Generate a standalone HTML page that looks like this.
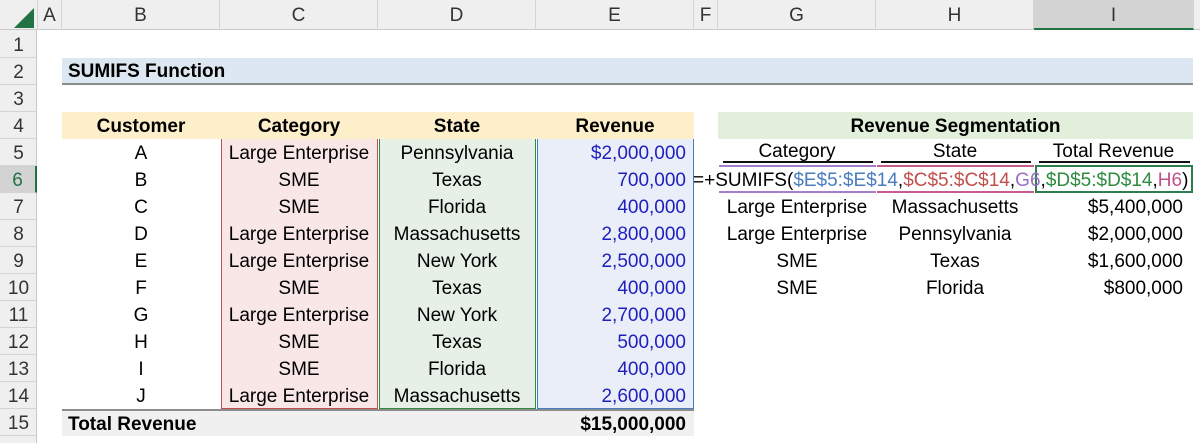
<!DOCTYPE html>
<html><head><meta charset="utf-8"><style>
*{margin:0;padding:0;box-sizing:border-box}
body{width:1200px;height:443px;overflow:hidden;background:#fff;font-family:"Liberation Sans",Arial,sans-serif;font-size:19px;color:#000;position:relative}
.a{position:absolute}
.t{position:absolute;height:27px;line-height:29px;white-space:nowrap}
.c{text-align:center}.r{text-align:right}.b{font-weight:bold}
.ch{position:absolute;top:0;height:30px;line-height:31px;text-align:center;color:#333;font-size:19px;border-right:1px solid #d4d4d4}
.rh{position:absolute;left:0;width:37px;height:27px;line-height:29px;text-align:center;color:#333;border-bottom:1px solid #d4d4d4;font-size:19px}
.blue{color:#1f1fbf}
</style></head><body>
<div class="a" style="left:0;top:0;width:1200px;height:30px;background:#efefef;border-bottom:1px solid #c8c8c8"></div>
<svg class="a" style="left:14px;top:8px" width="20" height="20"><polygon points="20,0 20,20 0,20" fill="#217346"/></svg>
<div class="ch" style="left:37px;width:25px;border-left:1px solid #d4d4d4">A</div>
<div class="ch" style="left:62px;width:158px">B</div>
<div class="ch" style="left:220px;width:158px">C</div>
<div class="ch" style="left:378px;width:158px">D</div>
<div class="ch" style="left:536px;width:158px">E</div>
<div class="ch" style="left:694px;width:24px">F</div>
<div class="ch" style="left:718px;width:158px">G</div>
<div class="ch" style="left:876px;width:158px">H</div>
<div class="ch" style="left:1034px;width:160px;background:#d3d3d3;border-bottom:2px solid #217346">I</div>
<div class="a" style="left:0;top:30px;width:37px;height:413px;background:#efefef;border-right:1px solid #c8c8c8"></div>
<div class="rh" style="top:31px">1</div><div class="rh" style="top:58px">2</div><div class="rh" style="top:85px">3</div>
<div class="rh" style="top:112px">4</div><div class="rh" style="top:139px">5</div>
<div class="rh" style="top:166px;background:#d3d3d3;color:#217346;border-right:2px solid #217346">6</div>
<div class="rh" style="top:193px">7</div><div class="rh" style="top:220px">8</div><div class="rh" style="top:247px">9</div>
<div class="rh" style="top:274px">10</div><div class="rh" style="top:301px">11</div><div class="rh" style="top:328px">12</div>
<div class="rh" style="top:355px">13</div><div class="rh" style="top:382px">14</div><div class="rh" style="top:409px">15</div>

<div class="a" style="left:62px;top:58px;width:1131px;height:27px;background:#dde7f1;border-bottom:2px solid #8c8c8c"></div>
<div class="t b" style="left:68px;top:57px">SUMIFS Function</div>

<div class="a" style="left:62px;top:112px;width:632px;height:27px;background:#fdefca"></div>
<div class="a" style="left:221px;top:139px;width:157px;height:270px;background:#f9e6e6;border:1.5px solid #c0504d;border-top:none"></div>
<div class="a" style="left:379px;top:139px;width:157px;height:270px;background:#e6f0e6;border:1.5px solid #2e8b40;border-top:none"></div>
<div class="a" style="left:537px;top:139px;width:157px;height:270px;background:#e9eef8;border:1.5px solid #4a7cc0;border-top:none"></div>
<div class="a" style="left:62px;top:409px;width:632px;height:27px;background:#f0f0f0;border-top:2px solid #8c8c8c"></div>

<div class="t c b" style="left:62px;top:112px;width:158px">Customer</div>
<div class="t c b" style="left:220px;top:112px;width:158px">Category</div>
<div class="t c b" style="left:378px;top:112px;width:158px">State</div>
<div class="t c b" style="left:536px;top:112px;width:158px">Revenue</div>

<div class="t c" style="left:62px;top:139px;width:158px">A</div><div class="t c" style="left:220px;top:139px;width:158px">Large Enterprise</div><div class="t c" style="left:378px;top:139px;width:158px">Pennsylvania</div><div class="t r blue" style="left:536px;top:139px;width:150px">$2,000,000</div>
<div class="t c" style="left:62px;top:166px;width:158px">B</div><div class="t c" style="left:220px;top:166px;width:158px">SME</div><div class="t c" style="left:378px;top:166px;width:158px">Texas</div><div class="t r blue" style="left:536px;top:166px;width:150px">700,000</div>
<div class="t c" style="left:62px;top:193px;width:158px">C</div><div class="t c" style="left:220px;top:193px;width:158px">SME</div><div class="t c" style="left:378px;top:193px;width:158px">Florida</div><div class="t r blue" style="left:536px;top:193px;width:150px">400,000</div>
<div class="t c" style="left:62px;top:220px;width:158px">D</div><div class="t c" style="left:220px;top:220px;width:158px">Large Enterprise</div><div class="t c" style="left:378px;top:220px;width:158px">Massachusetts</div><div class="t r blue" style="left:536px;top:220px;width:150px">2,800,000</div>
<div class="t c" style="left:62px;top:247px;width:158px">E</div><div class="t c" style="left:220px;top:247px;width:158px">Large Enterprise</div><div class="t c" style="left:378px;top:247px;width:158px">New York</div><div class="t r blue" style="left:536px;top:247px;width:150px">2,500,000</div>
<div class="t c" style="left:62px;top:274px;width:158px">F</div><div class="t c" style="left:220px;top:274px;width:158px">SME</div><div class="t c" style="left:378px;top:274px;width:158px">Texas</div><div class="t r blue" style="left:536px;top:274px;width:150px">400,000</div>
<div class="t c" style="left:62px;top:301px;width:158px">G</div><div class="t c" style="left:220px;top:301px;width:158px">Large Enterprise</div><div class="t c" style="left:378px;top:301px;width:158px">New York</div><div class="t r blue" style="left:536px;top:301px;width:150px">2,700,000</div>
<div class="t c" style="left:62px;top:328px;width:158px">H</div><div class="t c" style="left:220px;top:328px;width:158px">SME</div><div class="t c" style="left:378px;top:328px;width:158px">Texas</div><div class="t r blue" style="left:536px;top:328px;width:150px">500,000</div>
<div class="t c" style="left:62px;top:355px;width:158px">I</div><div class="t c" style="left:220px;top:355px;width:158px">SME</div><div class="t c" style="left:378px;top:355px;width:158px">Florida</div><div class="t r blue" style="left:536px;top:355px;width:150px">400,000</div>
<div class="t c" style="left:62px;top:382px;width:158px">J</div><div class="t c" style="left:220px;top:382px;width:158px">Large Enterprise</div><div class="t c" style="left:378px;top:382px;width:158px">Massachusetts</div><div class="t r blue" style="left:536px;top:382px;width:150px">2,600,000</div>
<div class="t b" style="left:68px;top:410px">Total Revenue</div>
<div class="t r b" style="left:536px;top:410px;width:150px">$15,000,000</div>

<div class="a" style="left:718px;top:112px;width:475px;height:27px;background:#e2efda"></div>
<div class="t c b" style="left:718px;top:112px;width:475px">Revenue Segmentation</div>
<div class="t c" style="left:718px;top:137px;width:158px">Category</div>
<div class="t c" style="left:876px;top:137px;width:158px">State</div>
<div class="t c" style="left:1034px;top:137px;width:159px">Total Revenue</div>
<div class="a" style="left:723px;top:161px;width:150px;height:2px;background:#111"></div>
<div class="a" style="left:881px;top:161px;width:150px;height:2px;background:#111"></div>
<div class="a" style="left:1039px;top:161px;width:151px;height:2px;background:#111"></div>
<div class="a" style="left:719px;top:165px;width:157px;height:28px;border-top:2px solid #a57fc9;border-bottom:2px solid #a57fc9"></div>
<div class="a" style="left:877px;top:165px;width:157px;height:28px;border-top:2px solid #c75b8f;border-bottom:2px solid #c75b8f"></div>
<div class="a" style="left:1035px;top:165px;width:158px;height:28px;border:2px solid #2e7d4f"></div>
<div class="t" style="left:693px;top:166px;font-size:19px">=+SUMIFS(<span style="color:#4a7cc0">$E$5:$E$14</span>,<span style="color:#c0504d">$C$5:$C$14</span>,<span style="color:#9b6fc3">G6</span>,<span style="color:#2e8b40">$D$5:$D$14</span>,<span style="color:#c0508a">H6</span>)</div>
<div class="t c" style="left:718px;top:193px;width:158px">Large Enterprise</div><div class="t c" style="left:876px;top:193px;width:158px">Massachusetts</div><div class="t r" style="left:1034px;top:193px;width:149px">$5,400,000</div>
<div class="t c" style="left:718px;top:220px;width:158px">Large Enterprise</div><div class="t c" style="left:876px;top:220px;width:158px">Pennsylvania</div><div class="t r" style="left:1034px;top:220px;width:149px">$2,000,000</div>
<div class="t c" style="left:718px;top:247px;width:158px">SME</div><div class="t c" style="left:876px;top:247px;width:158px">Texas</div><div class="t r" style="left:1034px;top:247px;width:149px">$1,600,000</div>
<div class="t c" style="left:718px;top:274px;width:158px">SME</div><div class="t c" style="left:876px;top:274px;width:158px">Florida</div><div class="t r" style="left:1034px;top:274px;width:149px">$800,000</div>
</body></html>
